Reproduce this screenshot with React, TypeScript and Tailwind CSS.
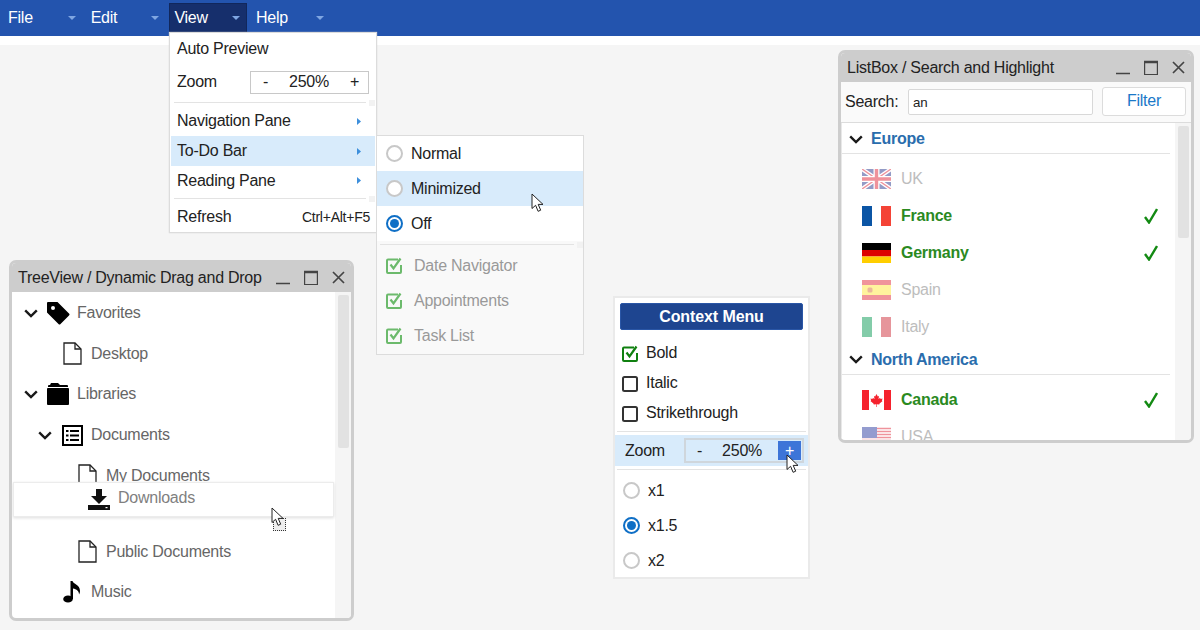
import React from "react";

const MENUS = ["File", "Edit", "View", "Help"];

function Caret() {
  return (
    <svg width="8" height="4" viewBox="0 0 8 4" className="shrink-0">
      <path d="M0 0h8L4 4z" fill="#7fa6e2" />
    </svg>
  );
}

function SideArrow() {
  return (
    <svg width="4" height="7" viewBox="0 0 4 7" className="shrink-0">
      <path d="M0 0l4 3.5L0 7z" fill="#3d8fdc" />
    </svg>
  );
}

function Chevron({ className = "" }: { className?: string }) {
  return (
    <svg width="14" height="9" viewBox="0 0 14 9" className={className}>
      <path d="M1.2 1.4L7 7l5.800-5.600" fill="none" stroke="#1a1a1a" strokeWidth="2.400" />
    </svg>
  );
}

function Separator({ className = "" }: { className?: string }) {
  return (
    <div className={`flex items-center h-px ${className}`}>
      <div className="flex-1 h-px bg-[#e3e3e3] ml-[3px]" />
      <div className="w-[6px] h-[6px] bg-[#f2f2f2] ml-[3px]" />
    </div>
  );
}

function Radio({ checked = false }: { checked?: boolean }) {
  return (
    <span
      className={`w-[17px] h-[17px] rounded-full border-2 shrink-0 flex items-center justify-center ${
        checked ? "border-[#0f6fc6] bg-white" : "border-[#c8c8c8] bg-white"
      }`}
    >
      {checked && <span className="w-[9px] h-[9px] rounded-full bg-[#0f6fc6]" />}
    </span>
  );
}

function CheckBox({ color, checked = true }: { color: string; checked?: boolean }) {
  return (
    <svg width="17" height="17" viewBox="0 0 17 17" className="shrink-0">
      <path
        d={checked ? "M12 2.500H2a1 1 0 0 0-1 1V15a1 1 0 0 0 1 1h12a1 1 0 0 0 1-1V8" : "M2.500 2h11a1.500 1.500 0 0 1 1.500 1.500v11a1.500 1.500 0 0 1-1.500 1.500h-11A1.500 1.500 0 0 1 1 14.500v-11A1.500 1.500 0 0 1 2.500 2z"}
        fill="none"
        stroke={color}
        strokeWidth="2"
      />
      {checked && <path d="M4.500 7.500l3 4L14.500 1.500" fill="none" stroke={color} strokeWidth="2.200" />}
    </svg>
  );
}

function Cursor({ className = "" }: { className?: string }) {
  return (
    <svg width="14" height="20" viewBox="0 0 14 20" className={className}>
      <path d="M1 1v14.500l3.600-3.200 2.500 6 2.600-1.100-2.500-5.800H12z" fill="#fff" stroke="#222" strokeWidth="1" />
    </svg>
  );
}

function WindowButtons() {
  return (
    <div className="flex items-center gap-[14px] shrink-0">
      <svg width="14" height="15" viewBox="0 0 14 15">
        <path d="M0 13.500h14" stroke="#444" strokeWidth="1.600" />
      </svg>
      <svg width="14" height="15" viewBox="0 0 14 15">
        <path d="M.6 2.500h12.800v12H.6z" fill="none" stroke="#444" strokeWidth="1.200" />
        <path d="M0 2h14" stroke="#444" strokeWidth="2.400" />
      </svg>
      <svg width="13" height="13" viewBox="0 0 13 13">
        <path d="M1 1l11 11M12 1L1 12" stroke="#444" strokeWidth="1.700" />
      </svg>
    </div>
  );
}

function Window({ title, className, children }: { title: string; className: string; children: React.ReactNode }) {
  return (
    <div className={`absolute flex flex-col border-[3px] border-[#cdcdcd] rounded-[7px] bg-white overflow-hidden ${className}`}>
      <div className="h-[29px] shrink-0 bg-[#cdcdcd] flex items-center justify-between pl-[6px] pr-[6px] text-[#222]">
        <span>{title}</span>
        <WindowButtons />
      </div>
      {children}
    </div>
  );
}

function ScrollBar({ className }: { className: string }) {
  return (
    <div className="w-[16px] shrink-0 bg-[#f5f5f5] pl-[3px] pt-[3px]">
      <div className={`w-[11px] rounded-[2px] bg-[#e2e2e2] ${className}`} />
    </div>
  );
}

const FileIcon = () => (
  <svg width="19" height="23" viewBox="0 0 19 23">
    <path d="M1 1h11l6 6v15H1z" fill="#fff" stroke="#222" strokeWidth="1.300" />
    <path d="M12 1v6h6" fill="none" stroke="#222" strokeWidth="1.300" />
  </svg>
);

const TagIcon = () => (
  <svg width="23" height="23" viewBox="0 0 23 23">
    <path
      fillRule="evenodd"
      d="M1 0h9.500L22 11.500a1.400 1.400 0 0 1 0 2L13.500 22a1.400 1.400 0 0 1-2 0L0 10.500V1a1 1 0 0 1 1-1zM6 4a2 2 0 1 0 0 4 2 2 0 0 0 0-4z"
      fill="#000"
    />
  </svg>
);

const FolderIcon = () => (
  <svg width="22" height="22" viewBox="0 0 22 22">
    <path d="M4 0h7l2 2h7a1 1 0 0 1 1 1v1H1V3a1 1 0 0 1 1-1h1z" fill="#000" />
    <path d="M1 5h20a1 1 0 0 1 1 1v15a1 1 0 0 1-1 1H1a1 1 0 0 1-1-1V6a1 1 0 0 1 1-1z" fill="#000" />
  </svg>
);

const ListIcon = () => (
  <svg width="21" height="21" viewBox="0 0 21 21">
    <path d="M1 1h19v19H1z" fill="#fff" stroke="#000" strokeWidth="2" />
    <path d="M4 5h2.500v2H4zM4 9.500h2.500v2H4zM4 14h2.500v2H4zM8 5h9v2H8zM8 9.500h9v2H8zM8 14h9v2H8z" fill="#000" />
  </svg>
);

const MusicIcon = () => (
  <svg width="18" height="22" viewBox="0 0 18 22">
    <ellipse cx="5" cy="18" rx="4.800" ry="3.600" fill="#000" />
    <path d="M7.500 18V0h2c.6 3 7.500 3.500 7.500 10 0 1.500-.4 2.500-1 3.500.2-3.500-2.500-5.500-6-6V18z" fill="#000" />
  </svg>
);

const DownloadIcon = () => (
  <svg width="22" height="22" viewBox="0 0 22 22">
    <path d="M8 0h6v7h5l-8 8-8-8h5z" fill="#111" />
    <path d="M0 16h22v5H0z" fill="#111" />
    <path d="M17.500 18h2v1.200h-2z" fill="#fff" />
  </svg>
);

function TreeRow({
  indent,
  open = false,
  icon,
  label,
  className = "h-[40.6px]",
}: {
  indent: string;
  open?: boolean;
  icon: React.ReactNode;
  label: string;
  className?: string;
}) {
  return (
    <div className={`flex items-center shrink-0 text-[#666] ${indent} ${className}`}>
      <span className="w-[24px] shrink-0 flex pl-[2px]">{open && <Chevron />}</span>
      <span className="w-[24px] shrink-0 mr-[7px] flex justify-center">{icon}</span>
      <span>{label}</span>
    </div>
  );
}

const UKFlag = () => (
  <svg width="29" height="20" viewBox="0 0 29 20" className="opacity-50">
    <rect width="29" height="20" fill="#2a3a8f" />
    <path d="M0 0l29 20M29 0L0 20" stroke="#fff" strokeWidth="4" />
    <path d="M0 0l29 20M29 0L0 20" stroke="#e0283a" strokeWidth="1.400" />
    <path d="M14.500 0v20M0 10h29" stroke="#fff" strokeWidth="6" />
    <path d="M14.500 0v20M0 10h29" stroke="#e0283a" strokeWidth="3.400" />
  </svg>
);

const FranceFlag = () => (
  <svg width="29" height="20" viewBox="0 0 29 20">
    <rect width="10" height="20" fill="#0b55a5" />
    <rect x="19" width="10" height="20" fill="#f44336" />
  </svg>
);

const GermanyFlag = () => (
  <svg width="29" height="20" viewBox="0 0 29 20">
    <rect width="29" height="7" fill="#000" />
    <rect y="7" width="29" height="6.500" fill="#dd0000" />
    <rect y="13.500" width="29" height="6.500" fill="#ffce00" />
  </svg>
);

const SpainFlag = () => (
  <svg width="29" height="20" viewBox="0 0 29 20" className="opacity-50">
    <rect width="29" height="20" fill="#e22b3a" />
    <rect y="5" width="29" height="10" fill="#ffe83d" />
    <rect x="5.500" y="7.500" width="5" height="5" rx="1.500" fill="#d9743a" />
  </svg>
);

const ItalyFlag = () => (
  <svg width="29" height="20" viewBox="0 0 29 20" className="opacity-50">
    <rect width="10" height="20" fill="#0a9a55" />
    <rect x="19" width="10" height="20" fill="#cf2d3a" />
  </svg>
);

const CanadaFlag = () => (
  <svg width="29" height="20" viewBox="0 0 29 20">
    <rect width="7" height="20" fill="#f5222d" />
    <rect x="22" width="7" height="20" fill="#f5222d" />
    <path
      d="M14.500 4l1.300 2.400 1.200-.5-.5 3.300 1.500-1.400.6 1.100 1.900-.3-.6 2.100.7.400-3 2.500-.4 1-2.400-.3v2.700h-.6v-2.700l-2.400.3-.4-1-3-2.500.7-.4-.6-2.100 1.900.3.6-1.100 1.500 1.400-.5-3.300 1.200.5z"
      fill="#f5222d"
    />
  </svg>
);

const USAFlag = () => (
  <svg width="29" height="20" viewBox="0 0 29 20" className="opacity-50">
    <rect width="29" height="20" fill="#fff" />
    <path d="M0 1.500h29M0 4.500h29M0 7.500h29M0 10.500h29M0 13.500h29M0 16.500h29M0 19.500h29" stroke="#e0283a" strokeWidth="1.500" />
    <rect width="15" height="11" fill="#2a3a9f" />
  </svg>
);

function GroupHeader({ name, className }: { name: string; className: string }) {
  return (
    <div className={`flex items-center border-b border-[#e3e3e3] mr-[5px] ${className}`}>
      <Chevron className="ml-[7px] mr-[8px]" />
      <span className="font-bold text-[#2a6dad]">{name}</span>
    </div>
  );
}

function Country({ flag, name, on = false }: { flag: React.ReactNode; name: string; on?: boolean }) {
  return (
    <div className="h-[37px] shrink-0 flex items-center pl-[20px] pr-[17px]">
      <span className="w-[39px] shrink-0 flex">{flag}</span>
      <span className={`flex-1 ${on ? "font-bold text-[#2b8a1f]" : "text-[#bdbdbd]"}`}>{name}</span>
      {on && (
        <svg width="14" height="16" viewBox="0 0 14 16">
          <path d="M1 9l4 5.500L13 1" fill="none" stroke="#138a13" strokeWidth="2.400" />
        </svg>
      )}
    </div>
  );
}

export default function App() {
  return (
    <div className="relative w-[1200px] h-[630px] overflow-hidden bg-[#f5f5f5] font-['Liberation_Sans',Arial,sans-serif] text-[16px] tracking-[-0.25px] text-[#222]">
      {/* Menu bar */}
      <div className="h-[36px] bg-[#2354ae] flex items-start pl-[4px] pt-[3px] gap-[4.7px] text-white">
        {MENUS.map(m => (
          <div
            key={m}
            className={`w-[78px] h-[30px] flex items-center justify-between pl-[4px] pr-[6px] ${
              m === "View" ? "bg-[#162f6c] border border-[#11275c] pl-[3px]" : ""
            }`}
          >
            <span>{m}</span>
            <Caret />
          </div>
        ))}
      </div>
      <div className="h-[9px] bg-white" />

      {/* View dropdown */}
      <div className="absolute left-[169px] top-[32px] w-[208px] h-[201px] bg-white border border-[#dcdcdc] px-px flex flex-col shadow-[0_0_1px_#ccc]">
        <div className="h-[32px] flex items-center px-[6px]">Auto Preview</div>
        <div className="h-[34px] flex items-center justify-between pl-[6px] pr-[6px]">
          <span>Zoom</span>
          <div className="w-[119px] h-[23px] border border-[#c8c8c8] flex items-center justify-between pl-[12px] pr-[9px]">
            <span>-</span>
            <span>250%</span>
            <span>+</span>
          </div>
        </div>
        <Separator className="my-[3px]" />
        <div className="h-[30px] flex items-center justify-between pl-[6px] pr-[14px]">
          <span>Navigation Pane</span>
          <SideArrow />
        </div>
        <div className="h-[30px] flex items-center justify-between pl-[6px] pr-[14px] bg-[#d8ebfb]">
          <span>To-Do Bar</span>
          <SideArrow />
        </div>
        <div className="h-[29px] flex items-center justify-between pl-[6px] pr-[14px]">
          <span>Reading Pane</span>
          <SideArrow />
        </div>
        <Separator className="my-[3px]" />
        <div className="h-[30px] flex items-center justify-between pl-[6px] pr-[5px]">
          <span>Refresh</span>
          <span className="text-[14px]">Ctrl+Alt+F5</span>
        </div>
      </div>

      {/* To-Do Bar submenu */}
      <div className="absolute left-[376px] top-[135px] w-[208px] h-[220px] bg-white border border-[#dcdcdc] flex flex-col">
        <div className="h-[35px] shrink-0 flex items-center gap-[8px] pl-[9px]">
          <Radio />
          <span>Normal</span>
        </div>
        <div className="h-[35px] shrink-0 flex items-center gap-[8px] pl-[9px] bg-[#d8ebfb]">
          <Radio />
          <span>Minimized</span>
        </div>
        <div className="h-[35px] shrink-0 flex items-center gap-[8px] pl-[9px]">
          <Radio checked />
          <span>Off</span>
        </div>
        <div className="flex-1 bg-[#f9f9f9] pt-[3px] text-[#999]">
          <Separator className="mb-[3px]" />
          {["Date Navigator", "Appointments", "Task List"].map(t => (
            <div key={t} className="h-[35px] flex items-center gap-[11px] pl-[9px]">
              <CheckBox color="#6cba6c" />
              <span>{t}</span>
            </div>
          ))}
        </div>
      </div>
      <Cursor className="absolute left-[531px] top-[193px]" />

      {/* TreeView window */}
      <Window title="TreeView / Dynamic Drag and Drop" className="left-[9px] top-[260px] w-[345px] h-[361px]">
        <div className="flex flex-1 min-h-0">
          <div className="flex-1 flex flex-col overflow-hidden pt-px">
            <TreeRow indent="pl-[10px]" open icon={<TagIcon />} label="Favorites" />
            <TreeRow indent="pl-[24px]" icon={<FileIcon />} label="Desktop" />
            <TreeRow indent="pl-[10px]" open icon={<FolderIcon />} label="Libraries" />
            <TreeRow indent="pl-[24px]" open icon={<ListIcon />} label="Documents" />
            <TreeRow indent="pl-[39px]" icon={<FileIcon />} label="My Documents" className="h-[40.6px] mb-[36px]" />
            <TreeRow indent="pl-[39px]" icon={<FileIcon />} label="Public Documents" className="h-[40px]" />
            <TreeRow indent="pl-[24px]" icon={<MusicIcon />} label="Music" />
          </div>
          <ScrollBar className="h-[153px]" />
        </div>
      </Window>

      {/* Item being dragged */}
      <div className="absolute left-[13px] top-[482px] w-[321px] h-[35px] bg-white border border-[#ececec] shadow-[0_1px_3px_#ddd] flex items-center pl-[74px] text-[#808080]">
        <span className="mr-[8px] flex">
          <DownloadIcon />
        </span>
        <span className="pb-[3px]">Downloads</span>
      </div>
      <div className="absolute left-[273px] top-[518px] w-[13px] h-[13px] border border-dotted border-[#333] bg-[#eee]" />
      <Cursor className="absolute left-[271px] top-[507px]" />

      {/* Context menu */}
      <div className="absolute left-[613px] top-[296px] w-[197px] h-[283px] bg-white border-2 border-[#eaeaea] flex flex-col">
        <div className="mx-[5px] mt-[5px] h-[27px] shrink-0 rounded-[2px] bg-[#1e4590] border border-[#2a56a6] flex items-center justify-center font-bold text-white tracking-[-0.1px]">
          Context Menu
        </div>
        <div className="mt-[8px] shrink-0 flex flex-col">
          <div className="h-[30px] flex items-center gap-[7px] pl-[7px]">
            <CheckBox color="#108010" />
            <span>Bold</span>
          </div>
          <div className="h-[30px] flex items-center gap-[7px] pl-[7px]">
            <CheckBox color="#333" checked={false} />
            <span>Italic</span>
          </div>
          <div className="h-[30px] flex items-center gap-[7px] pl-[7px]">
            <CheckBox color="#333" checked={false} />
            <span>Strikethrough</span>
          </div>
        </div>
        <div className="h-px shrink-0 bg-[#e3e3e3] mx-[2px] mt-[3px]" />
        <div className="h-[31px] mt-[3px] shrink-0 bg-[#d8ebfb] flex items-center justify-between pl-[10px] pr-[4px]">
          <span>Zoom</span>
          <div className="w-[120px] h-[25px] border-2 border-[#cfd6dc] flex items-center justify-between pl-[11px] pr-[1px]">
            <span>-</span>
            <span className="ml-[4px]">250%</span>
            <span className="w-[23px] h-[19px] bg-[#3d75d8] text-white flex items-center justify-center">+</span>
          </div>
        </div>
        <div className="h-px shrink-0 bg-[#e3e3e3] mx-[2px] mt-[3px]" />
        <div className="mt-[3px] shrink-0 flex flex-col">
          <div className="h-[35px] flex items-center gap-[8px] pl-[8px]">
            <Radio />
            <span>x1</span>
          </div>
          <div className="h-[35px] flex items-center gap-[8px] pl-[8px]">
            <Radio checked />
            <span>x1.5</span>
          </div>
          <div className="h-[35px] flex items-center gap-[8px] pl-[8px]">
            <Radio />
            <span>x2</span>
          </div>
        </div>
      </div>
      <Cursor className="absolute left-[786px] top-[454px]" />

      {/* ListBox window */}
      <Window title="ListBox / Search and Highlight" className="left-[838px] top-[50px] w-[356px] h-[393px]">
        <div className="h-[41px] shrink-0 bg-[#fafafa] border-b border-[#dcdcdc] flex items-center pl-[4px] pr-[5px]">
          <span className="w-[63px] shrink-0">Search:</span>
          <input
            readOnly
            value="an"
            className="w-[185px] h-[26px] border border-[#d8d8d8] rounded-[2px] bg-white px-[4px] text-[13.3px] text-[#222] outline-none"
          />
          <button className="ml-[9px] mb-[2px] w-[84px] h-[29px] border border-[#dcdcdc] rounded-[3px] bg-white text-[#1a78c8]">
            Filter
          </button>
        </div>
        <div className="flex flex-1 min-h-0">
          <div className="flex-1 flex flex-col overflow-hidden border-l border-[#e8e8e8]">
            <GroupHeader name="Europe" className="h-[31px] pt-[2px] shrink-0 mb-[6.5px]" />
            <Country flag={<UKFlag />} name="UK" />
            <Country flag={<FranceFlag />} name="France" on />
            <Country flag={<GermanyFlag />} name="Germany" on />
            <Country flag={<SpainFlag />} name="Spain" />
            <Country flag={<ItalyFlag />} name="Italy" />
            <GroupHeader name="North America" className="h-[29.5px] shrink-0 mb-[6.5px]" />
            <Country flag={<CanadaFlag />} name="Canada" on />
            <Country flag={<USAFlag />} name="USA" />
          </div>
          <ScrollBar className="h-[112px]" />
        </div>
      </Window>
    </div>
  );
}
